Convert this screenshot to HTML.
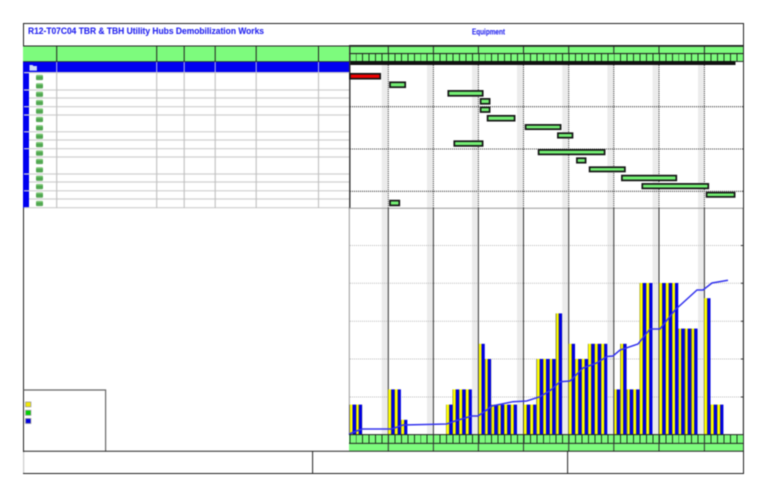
<!DOCTYPE html>
<html>
<head>
<meta charset="utf-8">
<style>
html,body{margin:0;padding:0;background:#fff;width:768px;height:497px;overflow:hidden}
svg{display:block;filter:blur(.4px)}
text{font-family:"Liberation Sans",sans-serif;font-weight:bold;fill:#2424f0;stroke:#2424f0;stroke-width:.1}
</style>
</head>
<body>
<svg width="768" height="497" viewBox="0 0 768 497" xmlns="http://www.w3.org/2000/svg">
<defs>
<linearGradient id="cells" gradientUnits="userSpaceOnUse" x1="349.3" y1="0" x2="355.75" y2="0" spreadMethod="repeat">
<stop offset="0" stop-color="#1c3a1c"/><stop offset=".15" stop-color="#1c3a1c"/>
<stop offset=".15" stop-color="#7dfb7d"/><stop offset="1" stop-color="#7dfb7d"/>
</linearGradient>
<linearGradient id="bars" gradientUnits="userSpaceOnUse" x1="349.3" y1="0" x2="355.75" y2="0" spreadMethod="repeat">
<stop offset="0" stop-color="#77771e"/><stop offset=".1" stop-color="#77771e"/>
<stop offset=".1" stop-color="#ffff00"/><stop offset=".46" stop-color="#ffff00"/>
<stop offset=".46" stop-color="#55552a"/><stop offset=".53" stop-color="#55552a"/>
<stop offset=".53" stop-color="#0000e0"/><stop offset="1" stop-color="#0000e0"/>
</linearGradient>
<linearGradient id="icg" x1="0" y1="0" x2="0" y2="1">
<stop offset="0" stop-color="#a0d898"/><stop offset=".45" stop-color="#4aa84a"/><stop offset="1" stop-color="#5fa85f"/>
</linearGradient>
<g id="ic">
<rect x="36" y="-2.6" width="7" height="5.4" rx="1" fill="url(#icg)"/>
</g>
</defs>

<!-- frame -->
<rect x="23.5" y="23.5" width="720" height="450" fill="#fff" stroke="#222" stroke-width="1"/>

<!-- title -->
<text x="28" y="34" font-size="9" textLength="236" lengthAdjust="spacingAndGlyphs">R12-T07C04 TBR &amp; TBH Utility Hubs Demobilization Works</text>
<text x="472" y="34.5" font-size="8.5" textLength="33" lengthAdjust="spacingAndGlyphs">Equipment</text>

<!-- weekend bands -->
<g fill="#ececec">
<rect x="381.7" y="65" width="6.4" height="370"/>
<rect x="427" y="65" width="6.4" height="370"/>
<rect x="472" y="65" width="6.4" height="370"/>
<rect x="517" y="65" width="6.4" height="370"/>
<rect x="562.3" y="65" width="6.4" height="370"/>
<rect x="607.4" y="65" width="6.4" height="370"/>
<rect x="652.6" y="65" width="6.4" height="370"/>
<rect x="698" y="65" width="6.4" height="370"/>
</g>

<!-- table header -->
<rect x="23" y="46" width="327" height="16" fill="#7dfb7d"/>
<path d="M23 46H350M23 61.7H350" stroke="#222" stroke-width="1"/>
<path d="M56.7 46V62M156.7 46V62M184.2 46V62M215.2 46V62M256.2 46V62M318.5 46V62" stroke="#222" stroke-width="1"/>

<!-- table body -->
<rect x="23" y="62" width="327" height="10.4" fill="#0000f0"/>
<rect x="23" y="72" width="6" height="136" fill="#0000f0"/>
<path d="M56.7 62V72M156.7 62V72M184.2 62V72M215.2 62V72M256.2 62V72M318.5 62V72" stroke="#c8c8e8" stroke-width=".9"/>
<path d="M24 72.6H350M24 90H350M24 106.7H350M24 115H350M24 131.8H350M24 148.7H350M24 174H350M24 190.8H350M24 207.7H350" stroke="#d0d0d0" stroke-width="1.2"/>
<path d="M29 98H350M29 140H350M29 157H350M29 182H350M29 199H350" stroke="#d0d0d0" stroke-width="1.2"/>
<path d="M56.7 72V208M156.7 72V208M184.2 72V208M215.2 72V208M256.2 72V208M318.5 72V208" stroke="#c0c0c0" stroke-width="1.1"/>

<!-- folder + row icons -->
<path d="M29.5 65h3l1 1h3.4v4.6h-7.4z" fill="#cfdcf4"/>
<use href="#ic" y="77.3"/><use href="#ic" y="85.7"/><use href="#ic" y="94.1"/><use href="#ic" y="102.5"/>
<use href="#ic" y="110.9"/><use href="#ic" y="119.3"/><use href="#ic" y="127.7"/><use href="#ic" y="136.1"/>
<use href="#ic" y="144.5"/><use href="#ic" y="152.9"/><use href="#ic" y="161.3"/><use href="#ic" y="169.7"/>
<use href="#ic" y="178.1"/><use href="#ic" y="186.5"/><use href="#ic" y="194.9"/><use href="#ic" y="203.3"/>

<!-- gantt header -->
<rect x="350" y="46" width="393" height="8" fill="#7dfb7d"/>
<rect x="350" y="54" width="393" height="8" fill="url(#cells)"/>
<rect x="349" y="45" width="394.5" height="1.8" fill="#222"/>
<rect x="349" y="53" width="394.5" height="1.1" fill="#222"/>
<rect x="349" y="61" width="386.5" height="4" fill="#111"/>
<rect x="735" y="61" width="8.5" height="1" fill="#333"/>
<path d="M388.3 46V54M433.4 46V54M478.4 46V54M523.5 46V54M568.7 46V54M613.8 46V54M659 46V54M704.4 46V54" stroke="#222" stroke-width="1"/>

<!-- gantt grid -->
<path d="M388.3 65V208M433.4 65V208M478.4 65V208M523.5 65V208M568.7 65V208M613.8 65V208M659 65V208M704.4 65V208" stroke="#333" stroke-width="1" stroke-dasharray="1 1"/>
<path d="M350 106.7H743M350 149H743M350 191.3H743" stroke="#333" stroke-width="1.1" stroke-dasharray="1 1"/>
<path d="M349.8 46V208" stroke="#333" stroke-width="1.4"/>
<path d="M348.5 208.2H743" stroke="#999" stroke-width="1"/>

<!-- gantt bars -->
<g stroke="#141414" stroke-width="1.7" fill="#74f074">
<rect x="349.9" y="73.8" width="30.3" height="4.9" fill="#f00000"/>
<rect x="390" y="82.3" width="15.2" height="4.9"/>
<rect x="448.3" y="90.9" width="34.4" height="4.9"/>
<rect x="480.6" y="98.9" width="9" height="4.9"/>
<rect x="480.6" y="107.4" width="9" height="4.6"/>
<rect x="487.6" y="115.8" width="27" height="4.9"/>
<rect x="525.6" y="124.9" width="35" height="4.3"/>
<rect x="557.9" y="133.2" width="14.6" height="4.5"/>
<rect x="454.3" y="141.2" width="28.3" height="4.7"/>
<rect x="538.6" y="149.9" width="66" height="4.5"/>
<rect x="576.9" y="158.2" width="8.7" height="4.5"/>
<rect x="589.6" y="167.2" width="35.3" height="4.3"/>
<rect x="621.9" y="175.6" width="54.4" height="4.8"/>
<rect x="642.3" y="183.9" width="66" height="4.5"/>
<rect x="706.6" y="192.6" width="28" height="4.3"/>
<rect x="390" y="200.6" width="9.3" height="4.8"/>
</g>

<!-- chart grid -->
<path d="M350 245.5H743M350 283.3H743M350 321.2H743M350 359H743M350 397H743" stroke="#bbb" stroke-width="1" stroke-dasharray="1 1"/>
<path d="M349.3 208V435" stroke="#999" stroke-width="1"/>
<path d="M388.3 208V451M433.4 208V451M478.4 208V451M523.5 208V451M568.7 208V451M613.8 208V451M659 208V451M704.4 208V451" stroke="#333" stroke-width="1"/>
<path d="M743.3 208V451" stroke="#333" stroke-width="1"/>
<path d="M741 245.5H743M741 283.3H743M741 321.2H743M741 359H743M741 397H743" stroke="#333" stroke-width="1"/>

<!-- histogram -->
<g fill="url(#bars)">
<rect x="349.3" y="404.6" width="12.9" height="30.4"/>
<rect x="388" y="389.4" width="12.9" height="45.6"/>
<rect x="400.9" y="419.8" width="6.45" height="15.2"/>
<rect x="446.05" y="404.6" width="6.45" height="30.4"/>
<rect x="452.5" y="389.4" width="19.35" height="45.6"/>
<rect x="478.3" y="343.8" width="6.45" height="91.2"/>
<rect x="484.75" y="359" width="6.45" height="76"/>
<rect x="491.2" y="404.6" width="25.8" height="30.4"/>
<rect x="523.45" y="404.6" width="12.9" height="30.4"/>
<rect x="536.35" y="359" width="19.35" height="76"/>
<rect x="555.7" y="313.4" width="6.45" height="121.6"/>
<rect x="568.6" y="343.8" width="6.45" height="91.2"/>
<rect x="575.05" y="359" width="12.9" height="76"/>
<rect x="587.95" y="343.8" width="19.35" height="91.2"/>
<rect x="613.75" y="389.4" width="6.45" height="45.6"/>
<rect x="620.2" y="343.8" width="6.45" height="91.2"/>
<rect x="626.65" y="389.4" width="12.9" height="45.6"/>
<rect x="639.55" y="283" width="12.9" height="152"/>
<rect x="658.9" y="283" width="19.35" height="152"/>
<rect x="678.25" y="328.6" width="19.35" height="106.4"/>
<rect x="704.05" y="298.2" width="6.45" height="136.8"/>
<rect x="710.5" y="404.6" width="12.9" height="30.4"/>
</g>

<!-- cumulative curve -->
<polyline fill="none" stroke="#3434ee" stroke-width="1.5" points="349,434.5 352,432.7 362,429 391.7,429 403,425 446.7,424 455,421 471.7,416 478,416 486.7,410 491.7,406 513,401.7 526.7,401 540,396.7 550,390.7 560,381.7 570,381 583,368 596.7,363 607,356.5 613,356 620,350 638,344 650,329 660,329 675,310 697,290 703,290 712,283 728,280.3"/>

<!-- bottom time scale -->
<rect x="349" y="435" width="394" height="8.5" fill="url(#cells)"/>
<rect x="349" y="443.5" width="394" height="7.5" fill="#7dfb7d"/>
<path d="M349 434.6H743.5M349 443.4H743.5" stroke="#222" stroke-width="1"/>
<path d="M388.3 434V451M433.4 434V451M478.4 434V451M523.5 434V451M568.7 434V451M613.8 434V451M659 434V451M704.4 434V451" stroke="#333" stroke-width="1"/>

<!-- legend -->
<path d="M23.5 390H105.6V451" fill="none" stroke="#666" stroke-width="1.2"/>
<rect x="25.5" y="402" width="5.4" height="4.8" fill="#f0e800" stroke="#999" stroke-width=".8"/>
<rect x="25.5" y="410.3" width="5.4" height="5" fill="#00d000" stroke="#999" stroke-width=".8"/>
<rect x="25.5" y="418.5" width="5.4" height="5" fill="#0000e0" stroke="#999" stroke-width=".8"/>

<!-- footer -->
<rect x="23" y="452" width="1.2" height="21" fill="#ccc"/>
<path d="M23 451.2H743.5" stroke="#222" stroke-width="1"/>
<path d="M312.6 451V473.5M567.6 451V473.5" stroke="#222" stroke-width="1"/>
</svg>
</body>
</html>
